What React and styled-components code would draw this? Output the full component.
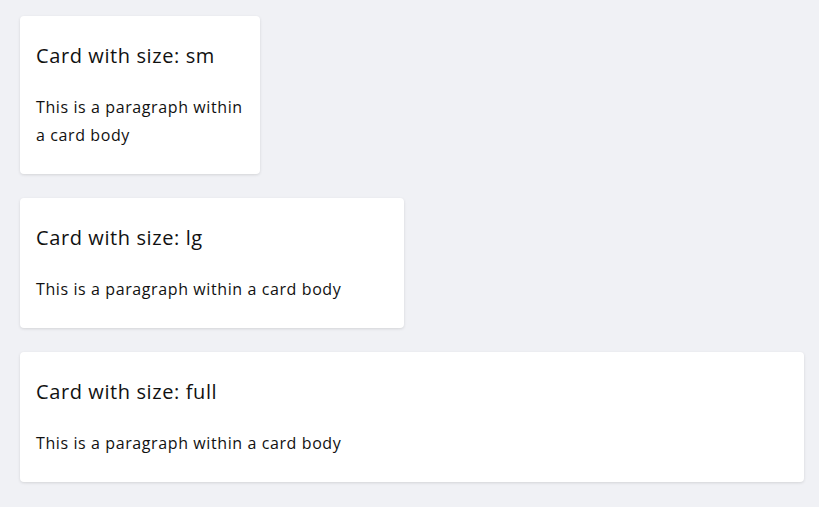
import React from "react";
import styled, { createGlobalStyle } from "styled-components";

const GlobalStyle = createGlobalStyle`
  html, body {
    margin: 0;
    padding: 0;
    background: #f0f1f5;
  }
  body {
    font-family: "Open Sans", "Liberation Sans", sans-serif;
    color: #111111;
  }
`;

const widths = {
  sm: "240px",
  lg: "384px",
  full: "100%",
};

const Page = styled.div`
  display: flex;
  flex-direction: column;
  align-items: flex-start;
  gap: 24px;
  padding: 16px 15px 24px 20px;
`;

const Card = styled.div`
  box-sizing: border-box;
  width: ${(p) => widths[p.size] || "100%"};
  background: #ffffff;
  border-radius: 4px;
  box-shadow: 0 1px 3px rgba(0, 0, 0, 0.12);
  padding: 25px 16px 25px;
`;

const CardTitle = styled.h3`
  margin: 0 0 22px;
  font-size: 20px;
  font-weight: 400;
  line-height: 30px;
  letter-spacing: 0.6px;
`;

const CardBody = styled.p`
  margin: 0;
  font-size: 16px;
  line-height: 28px;
  letter-spacing: 0.6px;
`;

const sizes = ["sm", "lg", "full"];

const App = () => {
  return (
    <>
      <GlobalStyle />
      <Page>
        {sizes.map((size) => (
          <Card key={size} size={size}>
            <CardTitle>Card with size: {size}</CardTitle>
            <CardBody>This is a paragraph within a card body</CardBody>
          </Card>
        ))}
      </Page>
    </>
  );
};

export default App;
